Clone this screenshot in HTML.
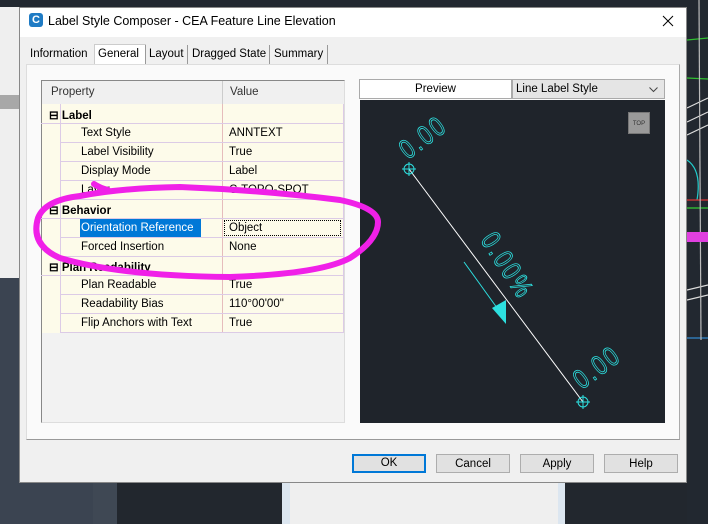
<!DOCTYPE html>
<html><head><style>
body{margin:0;width:708px;height:524px;overflow:hidden;position:relative;background:#efefef;font-family:"Liberation Sans",sans-serif;font-size:11.5px;color:#000}
.a{position:absolute}
.row{position:absolute;left:60px;width:283px;height:19px;border-bottom:1px solid #dccbe6;box-sizing:border-box}
.row span{position:absolute;top:3px}
.k{left:21px}.v{left:169px}
.cat{position:absolute;left:41px;width:302px;height:19px;border-bottom:1px solid #dccbe6;box-sizing:border-box;font-weight:bold}
.btn{position:absolute;top:454px;width:74px;height:19px;background:#e1e1e1;border:1px solid #adadad;text-align:center;line-height:19px;box-sizing:border-box}
</style></head><body>
<!-- background -->
<div class="a" style="left:0;top:0;width:708px;height:7px;background:#222830"></div>
<div class="a" style="left:0;top:95px;width:19px;height:14px;background:#a8a8a8"></div>
<div class="a" style="left:0;top:278px;width:19px;height:246px;background:#3b4451"></div>
<div class="a" style="left:0;top:483px;width:93px;height:41px;background:#3b4451"></div>
<div class="a" style="left:93px;top:483px;width:24px;height:41px;background:#3f4854"></div>
<div class="a" style="left:117px;top:483px;width:165px;height:41px;background:#22272e"></div>
<div class="a" style="left:282px;top:483px;width:8px;height:41px;background:#dce6f0"></div>
<div class="a" style="left:558px;top:483px;width:7px;height:41px;background:#dce6f0"></div>
<div class="a" style="left:565px;top:483px;width:143px;height:41px;background:#22272e"></div>
<div class="a" style="left:687px;top:0;width:21px;height:524px;background:#222830"></div>
<svg class="a" style="left:687px;top:0" width="21" height="524"><g fill="none" stroke-width="1.2"><path d="M0 40 L21 38" stroke="#30c030"/><path d="M0 78 L21 79" stroke="#30c030"/><path d="M0 108 L21 98 M0 122 L21 112 M0 135 L21 125" stroke="#ddd"/><path d="M0 160 Q15 170 10 200" stroke="#2cc"/><path d="M0 200 L21 200" stroke="#d33"/><path d="M0 208 L21 208" stroke="#3c3"/><path d="M0 290 L21 285 M0 300 L21 295" stroke="#ddd"/><path d="M0 338 L21 338" stroke="#38c"/><path d="M12 0 L14 340" stroke="#bbb"/></g><rect x="0" y="232" width="21" height="10" fill="#e040e0"/></svg>
<!-- dialog -->
<div class="a" style="left:19px;top:7px;width:668px;height:476px;background:#f0f0f0;border:1px solid #888;box-sizing:border-box"></div>
<div class="a" style="left:20px;top:8px;width:666px;height:29px;background:#fff"></div>
<div class="a" style="left:29px;top:13px;width:14px;height:14px;background:#1f7bc4;border-radius:3px;color:#fff;font-weight:bold;font-size:11px;text-align:center;line-height:14px">C</div>
<div class="a" style="left:48px;top:14px;font-size:12.5px">Label Style Composer - CEA Feature Line Elevation</div>
<svg class="a" style="left:662px;top:15px" width="12" height="12"><path d="M1 1L11 11M11 1L1 11" stroke="#000" stroke-width="1"/></svg>
<!-- tabs -->
<div class="a" style="left:30px;top:48px;">Information</div>
<div class="a" style="left:94px;top:44px;width:50px;height:21px;background:#fff;border:1px solid #ccc;border-bottom:none"></div>
<div class="a" style="left:98px;top:48px;">General</div>
<div class="a" style="left:145px;top:45px;height:19px;border-left:1px solid #999;border-right:1px solid #999;padding:3px 3px 0;box-sizing:border-box">Layout</div>
<div class="a" style="left:189px;top:45px;height:19px;border-right:1px solid #999;padding:3px 3px 0;box-sizing:border-box">Dragged State</div>
<div class="a" style="left:270px;top:45px;height:19px;border-right:1px solid #999;padding:3px 4px 0;box-sizing:border-box">Summary</div>
<div class="a" style="left:26px;top:64px;width:654px;height:376px;background:#fafafa;border:1px solid #ddd;border-right:1px solid #aaa;border-bottom:1px solid #999;box-sizing:border-box"></div>
<!-- grid -->
<div class="a" style="left:41px;top:80px;width:304px;height:343px;background:#f2f2f2;border:1px solid #888;border-right-color:#ddd;border-bottom-color:#ddd;box-sizing:border-box"></div>
<div class="a" style="left:42px;top:81px;width:302px;height:23px;background:#f0f0f0;border-bottom:1px solid #ccc"></div>
<div class="a" style="left:51px;top:86px;color:#333">Property</div>
<div class="a" style="left:222px;top:81px;height:23px;border-left:1px solid #ccc"></div>
<div class="a" style="left:230px;top:86px;color:#333">Value</div>
<div class="a" style="left:42px;top:104px;width:301px;height:229px;background:#fdfbea"></div>
<div class="a" style="left:60px;top:104px;height:229px;border-left:1px solid #dccbe6"></div>
<div class="a" style="left:222px;top:104px;height:229px;border-left:1px solid #e6bcbc"></div>
<div class="a" style="left:343px;top:104px;height:229px;border-left:1px solid #dccbe6"></div>
<div class="cat" style="top:105px"><span style="position:absolute;left:8px;top:3px">⊟ Label</span></div>
<div class="row" style="top:124px"><span class="k">Text Style</span><span class="v">ANNTEXT</span></div>
<div class="row" style="top:143px"><span class="k">Label Visibility</span><span class="v">True</span></div>
<div class="row" style="top:162px"><span class="k">Display Mode</span><span class="v">Label</span></div>
<div class="row" style="top:181px"><span class="k">Layer</span><span class="v">C-TOPO-SPOT</span></div>
<div class="cat" style="top:200px"><span style="position:absolute;left:8px;top:3px">⊟ Behavior</span></div>
<div class="row" style="top:219px"><span style="position:absolute;left:20px;top:0;width:121px;height:18px;background:#0078d7"></span><span class="k" style="color:#fff">Orientation Reference</span><span style="position:absolute;left:164px;top:1px;width:117px;height:16px;border:1px dotted #000;box-sizing:border-box"></span><span class="v">Object</span></div>
<div class="row" style="top:238px"><span class="k">Forced Insertion</span><span class="v">None</span></div>
<div class="cat" style="top:257px"><span style="position:absolute;left:8px;top:3px">⊟ Plan Readability</span></div>
<div class="row" style="top:276px"><span class="k">Plan Readable</span><span class="v">True</span></div>
<div class="row" style="top:295px"><span class="k">Readability Bias</span><span class="v">110°00'00"</span></div>
<div class="row" style="top:314px"><span class="k">Flip Anchors with Text</span><span class="v">True</span></div>
<!-- preview -->
<div class="a" style="left:359px;top:79px;width:153px;height:20px;background:#fff;border:1px solid #aaa;box-sizing:border-box;text-align:center;line-height:19px">Preview</div>
<div class="a" style="left:512px;top:79px;width:153px;height:20px;background:#e5e5e5;border:1px solid #aaa;box-sizing:border-box;line-height:19px;padding-left:3px">Line Label Style<svg style="position:absolute;right:6px;top:7px" width="9" height="6"><path d="M0.5 0.5L4.5 4.5L8.5 0.5" fill="none" stroke="#444"/></svg></div>
<div class="a" style="left:360px;top:100px;width:305px;height:323px;background:#1f242b"></div>
<div class="a" style="left:628px;top:112px;width:22px;height:22px;background:#9a9a9a;border:1px solid #777;box-sizing:border-box;font-size:6px;text-align:center;line-height:22px;color:#333">TOP</div>
<svg class="a" style="left:360px;top:100px" width="305" height="323">
<line x1="49" y1="69" x2="223" y2="302" stroke="#fff" stroke-width="1"/>
<g fill="none" stroke="#2de0e0" stroke-width="1">
<circle cx="49" cy="69" r="5"/><path d="M42 69H56M49 62V76"/>
<circle cx="223" cy="302" r="5"/><path d="M216 302H230M223 295V309"/>
<path d="M104 162 L140 212"/>
</g>
<path d="M132 208 L146 224 L146 200 Z" fill="#2de0e0"/>
<g font-family="Liberation Sans,sans-serif" font-size="25" fill="none" stroke="#2de0e0" stroke-width="0.8" letter-spacing="3">
<text transform="translate(48,60) rotate(-37) scale(0.85,1.1)">0.00</text>
<text transform="translate(120,140) rotate(57) scale(0.85,1.1)">0.00%</text>
<text transform="translate(222,290) rotate(-37) scale(0.85,1.1)">0.00</text>
</g>
</svg>
<!-- buttons -->
<div class="btn" style="left:352px;border:2px solid #0078d7;line-height:15px">OK</div>
<div class="btn" style="left:436px">Cancel</div>
<div class="btn" style="left:520px">Apply</div>
<div class="btn" style="left:604px">Help</div>
<!-- magenta annotation -->
<svg class="a" style="left:0;top:0" width="708" height="524">
<g fill="none" stroke="#f020e8" stroke-width="6" stroke-linecap="round" stroke-linejoin="round">
<path d="M94 184 Q100 188 108 190"/>
<path d="M80 196 Q45 200 38 218 Q30 245 60 258 Q120 276 230 277 Q320 274 350 258 Q378 240 378 222 Q378 208 340 200 Q260 190 180 187 Q120 188 80 196"/>
</g>
</svg>
</body></html>
